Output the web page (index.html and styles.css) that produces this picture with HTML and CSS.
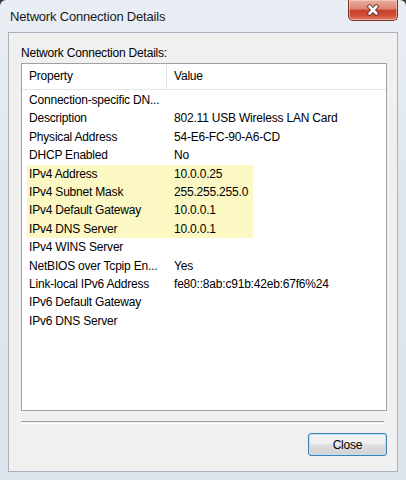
FILE: index.html
```html
<!DOCTYPE html>
<html>
<head>
<meta charset="utf-8">
<link rel="stylesheet" href="styles.css">
</head>
<body>
<div class="window">
  <div class="titlebar">
    <span class="title">Network Connection Details</span>
    <div class="xbtn">
      <svg width="18" height="12" viewBox="0 0 18 12">
        <path d="M5.5 2.5 L12.5 9.5 M12.5 2.5 L5.5 9.5" stroke="#5a2a22" stroke-width="4.4" stroke-linecap="round"/>
        <path d="M5.5 2.5 L12.5 9.5 M12.5 2.5 L5.5 9.5" stroke="#ffffff" stroke-width="2.6" stroke-linecap="round"/>
      </svg>
    </div>
  </div>
  <div class="client">
    <div class="label">Network Connection Details:</div>
    <div class="listbox">
      <div class="header">
        <div class="hcell c1">Property</div>
        <div class="hcell c2">Value</div>
      </div>
      <div class="row"><div class="cell c1">Connection-specific DN...</div><div class="cell c2"></div></div>
      <div class="row"><div class="cell c1">Description</div><div class="cell c2">802.11 USB Wireless LAN Card</div></div>
      <div class="row"><div class="cell c1">Physical Address</div><div class="cell c2">54-E6-FC-90-A6-CD</div></div>
      <div class="row"><div class="cell c1">DHCP Enabled</div><div class="cell c2">No</div></div>
      <div class="hl">
        <div class="row"><div class="cell c1">IPv4 Address</div><div class="cell c2">10.0.0.25</div></div>
        <div class="row"><div class="cell c1">IPv4 Subnet Mask</div><div class="cell c2">255.255.255.0</div></div>
        <div class="row"><div class="cell c1">IPv4 Default Gateway</div><div class="cell c2">10.0.0.1</div></div>
        <div class="row"><div class="cell c1">IPv4 DNS Server</div><div class="cell c2">10.0.0.1</div></div>
      </div>
      <div class="row"><div class="cell c1">IPv4 WINS Server</div><div class="cell c2"></div></div>
      <div class="row"><div class="cell c1">NetBIOS over Tcpip En...</div><div class="cell c2">Yes</div></div>
      <div class="row"><div class="cell c1">Link-local IPv6 Address</div><div class="cell c2">fe80::8ab:c91b:42eb:67f6%24</div></div>
      <div class="row"><div class="cell c1">IPv6 Default Gateway</div><div class="cell c2"></div></div>
      <div class="row"><div class="cell c1">IPv6 DNS Server</div><div class="cell c2"></div></div>
    </div>
    <div class="sep"></div>
    <div class="footer">
      <button class="btn">Close</button>
    </div>
  </div>
</div>
</body>
</html>
```

FILE: styles.css
```css
html, body {
  margin: 0;
  padding: 0;
}
body {
  width: 406px;
  height: 480px;
  overflow: hidden;
  background: #3a3a3a;
  font-family: "Liberation Sans", Arial, sans-serif;
  font-size: 12px;
  letter-spacing: -0.2px;
  color: #000;
}
.window {
  width: 406px;
  height: 480px;
  box-sizing: border-box;
  background: linear-gradient(#e9eef4, #dfe6ee 40%, #dce4ec);
  border-radius: 6px 6px 0 0;
  display: flex;
  flex-direction: column;
}
.titlebar {
  height: 32px;
  display: flex;
  align-items: flex-start;
  flex-shrink: 0;
}
.title {
  font-size: 13px;
  color: #1a1a1a;
  padding-left: 10px;
  padding-top: 9px;
}
.xbtn {
  margin-left: auto;
  margin-right: 8px;
  width: 50px;
  height: 21px;
  box-sizing: border-box;
  border: 1px solid #7a3328;
  border-top: none;
  border-radius: 0 0 5px 5px;
  background: linear-gradient(#eab0a2, #dc8270 45%, #c8412c 52%, #d0513a 80%, #e0826c);
  box-shadow: inset 0 0 0 1px rgba(255,220,210,0.5);
  display: flex;
  align-items: center;
  justify-content: center;
}
.xbtn svg { display: block; }
.client {
  flex: 1;
  margin: 0 8px 8px 8px;
  border: 1px solid #a8b2be;
  background: #f0f0f0;
  padding: 13px 10px 0 12px;
  display: flex;
  flex-direction: column;
}
.label {
  line-height: 14px;
  height: 14px;
}
.listbox {
  margin-top: 3px;
  height: 348px;
  box-sizing: border-box;
  border: 1px solid #a0a0a0;
  background: #fff;
}
.header {
  height: 26px;
  display: flex;
  border-bottom: 1px solid #e5e5e5;
  box-sizing: border-box;
  background: #fff;
}
.hcell {
  line-height: 25px;
  padding-left: 7px;
  box-sizing: border-box;
}
.hcell.c1 {
  width: 145px;
  border-right: 1px solid #e3e3e3;
}
.row {
  display: flex;
  height: 18.4px;
  line-height: 18.4px;
}
.header + .row { margin-top: 1px; }
.cell {
  padding-left: 7px;
  box-sizing: border-box;
  white-space: nowrap;
  overflow: hidden;
}
.cell.c1 { width: 145px; }
.cell.c2 { flex: 1; }
.hl {
  background: linear-gradient(#fbf8c4, #fbf8c4) no-repeat 5px -1px / 226px calc(100% + 2px);
}
.sep {
  margin-top: 10px;
  margin-right: 3px;
  height: 1px;
  border-top: 1px solid #a0a0a0;
  border-bottom: 1px solid #ffffff;
}
.footer {
  display: flex;
  justify-content: flex-end;
  margin-top: 9px;
}
.btn {
  width: 79px;
  height: 23px;
  font-family: "Liberation Sans", Arial, sans-serif;
  font-size: 12px;
  letter-spacing: -0.2px;
  color: #000;
  border: 1px solid #3c7fb1;
  border-radius: 3px;
  background: linear-gradient(#f6f6f6, #ececec 48%, #dedede 52%, #d2d2d2);
  box-shadow: inset 0 0 0 1px #bfe3f6;
  padding: 0;
}
```
